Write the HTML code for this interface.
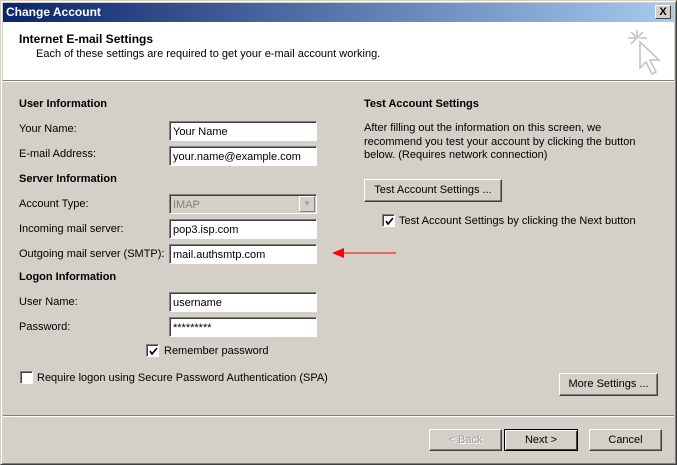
<!DOCTYPE html>
<html><head><meta charset="utf-8"><style>
*{margin:0;padding:0;box-sizing:border-box}
body{width:677px;height:465px;overflow:hidden;background:#d4d0c8;font-family:"Liberation Sans",sans-serif;font-size:11px;color:#000;position:relative}
.a{position:absolute;white-space:nowrap}
.frame{position:absolute;left:0;top:0;width:677px;height:465px;border-top:1px solid #d4d0c8;border-left:1px solid #d4d0c8;border-right:1px solid #404040;border-bottom:1px solid #404040;box-shadow:inset 1px 1px 0 #fff,inset -1px -1px 0 #808080}
.title{left:3px;top:3px;width:671px;height:19px;background:linear-gradient(to right,#0a246a,#a6caf0);color:#fff;font-weight:bold;font-size:12px;padding:2px 0 0 3px}
.close{left:655px;top:5px;width:16px;height:14px;background:#d4d0c8;border:1px solid;border-color:#fff #404040 #404040 #fff;font-size:11px;font-weight:bold;text-align:center;line-height:12px;color:#000}
.hdr{left:3px;top:22px;width:671px;height:58px;background:#fff}
.b{font-weight:bold}
.l{position:absolute;white-space:nowrap;left:19px}
.in{position:absolute;left:169px;width:148px;height:20px;background:#fff;border:1px solid;border-color:#808080 #fff #fff #808080;box-shadow:inset 1px 1px 0 #404040;padding:4px 0 0 3px;font-size:11px}
.btn{position:absolute;background:#d4d0c8;border:1px solid;border-color:#fff #404040 #404040 #fff;box-shadow:inset -1px -1px 0 #808080;text-align:center;font-size:11px}
.cb{position:absolute;width:13px;height:13px;background:#fff;border:1px solid;border-color:#808080 #fff #fff #808080;box-shadow:inset 1px 1px 0 #404040}
.cb svg{position:absolute;left:2px;top:2px}
</style></head><body>
<div class="frame"></div>
<div class="a title">Change Account</div>
<div class="a close">X</div>
<div class="a hdr"></div>
<div class="a b" style="left:19px;top:32px;font-size:12px">Internet E-mail Settings</div>
<div class="a" style="left:36px;top:48px">Each of these settings are required to get your e-mail account working.</div>
<svg class="a" style="left:624px;top:26px" width="40" height="54" viewBox="0 0 40 54"><g stroke="#c0c0c0" stroke-width="1.5" fill="none"><path d="M13 4v9M4 12h8M15 12h8M7 6l5 5M19 6l-5 5M7 18l5-5"/><path d="M16 16v26l6-6 6 12 4-2-6-12h9z" fill="#fff"/></g></svg>
<div class="a" style="left:3px;top:80px;width:671px;height:1px;background:#808080"></div>
<div class="a" style="left:3px;top:81px;width:671px;height:1px;background:#fff"></div>

<div class="l b" style="top:98px">User Information</div>
<div class="l" style="top:123px">Your Name:</div>
<div class="in" style="top:121px">Your Name</div>
<div class="l" style="top:148px">E-mail Address:</div>
<div class="in" style="top:146px">your.name@example.com</div>
<div class="l b" style="top:173px">Server Information</div>
<div class="l" style="top:198px">Account Type:</div>
<div class="in" style="top:194px;background:#d4d0c8;color:#808080">IMAP<div style="position:absolute;right:1px;top:1px;width:16px;height:16px;border:1px solid;border-color:#fff #808080 #808080 #fff;font-size:8px;line-height:14px;text-align:center;color:#a0a0a0">▼</div></div>
<div class="l" style="top:223px">Incoming mail server:</div>
<div class="in" style="top:219px">pop3.isp.com</div>
<div class="l" style="top:248px">Outgoing mail server (SMTP):</div>
<div class="in" style="top:244px">mail.authsmtp.com</div>
<svg class="a" style="left:330px;top:247px" width="68" height="12"><path d="M12 6H66" stroke="red" stroke-width="1"/><path d="M2 6L14 1V11z" fill="red"/></svg>
<div class="l b" style="top:271px">Logon Information</div>
<div class="l" style="top:296px">User Name:</div>
<div class="in" style="top:292px">username</div>
<div class="l" style="top:321px">Password:</div>
<div class="in" style="top:317px">*********</div>
<div class="cb" style="left:146px;top:344px"><svg width="9" height="9"><path d="M1 4l2 3 5-6" stroke="#000" stroke-width="1.6" fill="none"/></svg></div>
<div class="a" style="left:164px;top:345px">Remember password</div>
<div class="cb" style="left:20px;top:371px"></div>
<div class="a" style="left:37px;top:372px">Require logon using Secure Password Authentication (SPA)</div>

<div class="a b" style="left:364px;top:98px">Test Account Settings</div>
<div class="a" style="left:364px;top:122px;line-height:13.5px">After filling out the information on this screen, we<br>recommend you test your account by clicking the button<br>below. (Requires network connection)</div>
<div class="btn" style="left:364px;top:179px;width:138px;height:23px;line-height:21px">Test Account Settings ...</div>
<div class="cb" style="left:382px;top:214px"><svg width="9" height="9"><path d="M1 4l2 3 5-6" stroke="#000" stroke-width="1.6" fill="none"/></svg></div>
<div class="a" style="left:399px;top:215px">Test Account Settings by clicking the Next button</div>

<div class="btn" style="left:559px;top:373px;width:99px;height:23px;line-height:21px">More Settings ...</div>
<div class="a" style="left:3px;top:415px;width:671px;height:1px;background:#808080"></div>
<div class="a" style="left:3px;top:416px;width:671px;height:1px;background:#fff"></div>
<div class="btn" style="left:429px;top:429px;width:73px;height:22px;line-height:20px;color:#a0a0a0;text-shadow:1px 1px 0 #fff">&lt; Back</div>
<div class="btn" style="left:504px;top:429px;width:74px;height:22px;line-height:20px;border:1px solid #000;box-shadow:inset 1px 1px 0 #fff,inset -1px -1px 0 #404040">Next &gt;</div>
<div class="btn" style="left:589px;top:429px;width:73px;height:22px;line-height:20px">Cancel</div>
</body></html>
